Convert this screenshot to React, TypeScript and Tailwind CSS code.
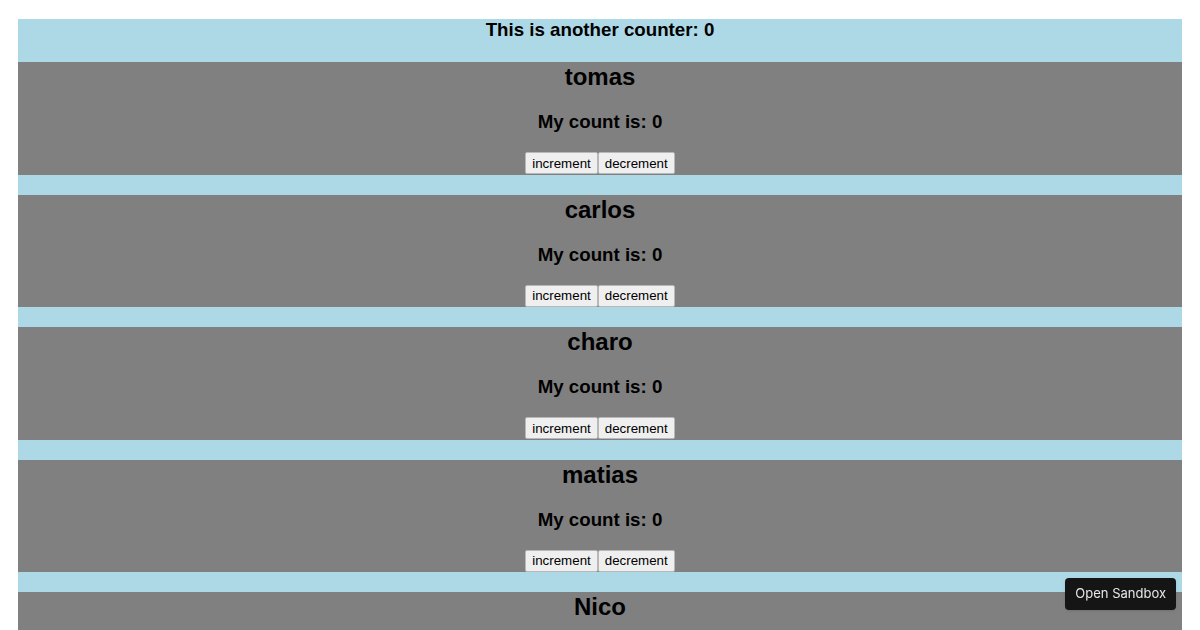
import { useState } from 'react';

const names = ['tomas', 'carlos', 'charo', 'matias', 'Nico'];

function Counter({ name }: { name: string }) {
  const [count, setCount] = useState(0);
  const btn =
    'h-[22px] px-[6px] bg-[#efefef] border border-[#b8b8b8] rounded-[2px] text-[13.33px] leading-[15px] text-black hover:bg-[#e5e5e5]';
  return (
    <div className="bg-[#808080] text-center">
      <h2 className="text-[24px] leading-[29px] font-bold">{name}</h2>
      <h3 className="mt-[20px] text-[18.72px] leading-[22px] font-bold">My count is: {count}</h3>
      <div className="mt-[17px] h-[24.5px] pt-[2px] flex justify-center">
        <button className={btn} onClick={() => setCount(c => c + 1)}>increment</button>
        <button className={btn} onClick={() => setCount(c => c - 1)}>decrement</button>
      </div>
    </div>
  );
}

export default function App() {
  return (
    <div className="min-h-screen bg-white pt-[19px] px-[18px] text-black font-['Liberation_Sans',Arial,sans-serif]">
      <div className="bg-[#add8e6]">
        <h3 className="text-center text-[18.72px] leading-[22px] font-bold mb-[21px]">
          This is another counter: 0
        </h3>
        <div className="flex flex-col gap-[20px]">
          {names.map(n => (
            <Counter key={n} name={n} />
          ))}
        </div>
      </div>
      <button className="fixed right-[24px] bottom-[20px] h-[32px] px-[10px] rounded-[4px] bg-[#151515] text-[#e8e8e8] text-[13px] font-['Inter',sans-serif] shadow">
        Open Sandbox
      </button>
    </div>
  );
}
